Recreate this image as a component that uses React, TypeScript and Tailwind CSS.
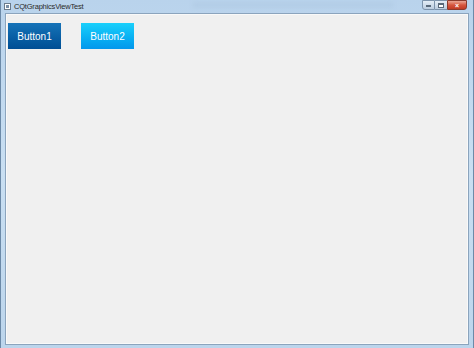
import React from "react";

export default function App() {
  return (
    <div
      className="w-[474px] h-[348px] flex flex-col overflow-hidden bg-gradient-to-b from-[#b9d3ec] via-[#c9dff2] to-[#bcd5ec] border-l border-r border-[#6c8aa8]"
      style={{ fontFamily: '"Segoe UI", "Liberation Sans", sans-serif' }}
    >
      <div className="h-[13px] flex items-start pl-[3px] shrink-0">
        <div className="mt-[3px] w-[7px] h-[7px] border border-[#6b7b8c] bg-white flex items-center justify-center">
          <div className="w-[3px] h-[3px] bg-[#7a8fa6]" />
        </div>
        <span className="ml-[3px] mt-[2px] text-[7.5px] leading-[9px] text-[#2a2a2a] tracking-[-0.2px]">
          CQtGraphicsViewTest
        </span>
        <div className="ml-[110px] mt-[2px] h-[6px] w-[200px] bg-[#a9c4de] opacity-40 blur-[2px]" />
        <div className="ml-auto mr-[6px] flex h-[10px]">
          <div className="w-[13px] h-[10px] rounded-bl-[3px] border border-[#7d93ab] bg-gradient-to-b from-[#e4edf6] to-[#bccde0] flex items-end justify-center pb-[2px]">
            <div className="w-[5px] h-[2px] bg-white border border-[#59697a]" />
          </div>
          <div className="w-[12px] h-[10px] border-y border-[#7d93ab] bg-gradient-to-b from-[#e4edf6] to-[#bccde0] flex items-center justify-center">
            <div className="w-[6px] h-[5px] border border-[#59697a] border-t-2 bg-white" />
          </div>
          <div className="w-[20px] h-[10px] rounded-br-[3px] border border-[#8b3a2c] bg-gradient-to-b from-[#e9a493] via-[#d6553d] to-[#c13a24] flex items-center justify-center text-[7px] leading-[7px] text-white font-bold">
            ×
          </div>
        </div>
      </div>
      <div className="flex-1 mx-[4px] mb-[3px] border border-[#8ba4bd] bg-[#f0f0f0] flex flex-col">
        <div className="flex-1 border border-white/60 pt-[8px] pl-[1px] flex items-start gap-[20px]">
          <button className="w-[53px] h-[26px] bg-gradient-to-b from-[#1673b8] to-[#004e94] text-white text-[10px] flex items-center justify-center">
            Button1
          </button>
          <button className="w-[53px] h-[26px] bg-gradient-to-b from-[#1ad0fb] to-[#0497ec] text-white text-[10px] flex items-center justify-center">
            Button2
          </button>
        </div>
      </div>
    </div>
  );
}
